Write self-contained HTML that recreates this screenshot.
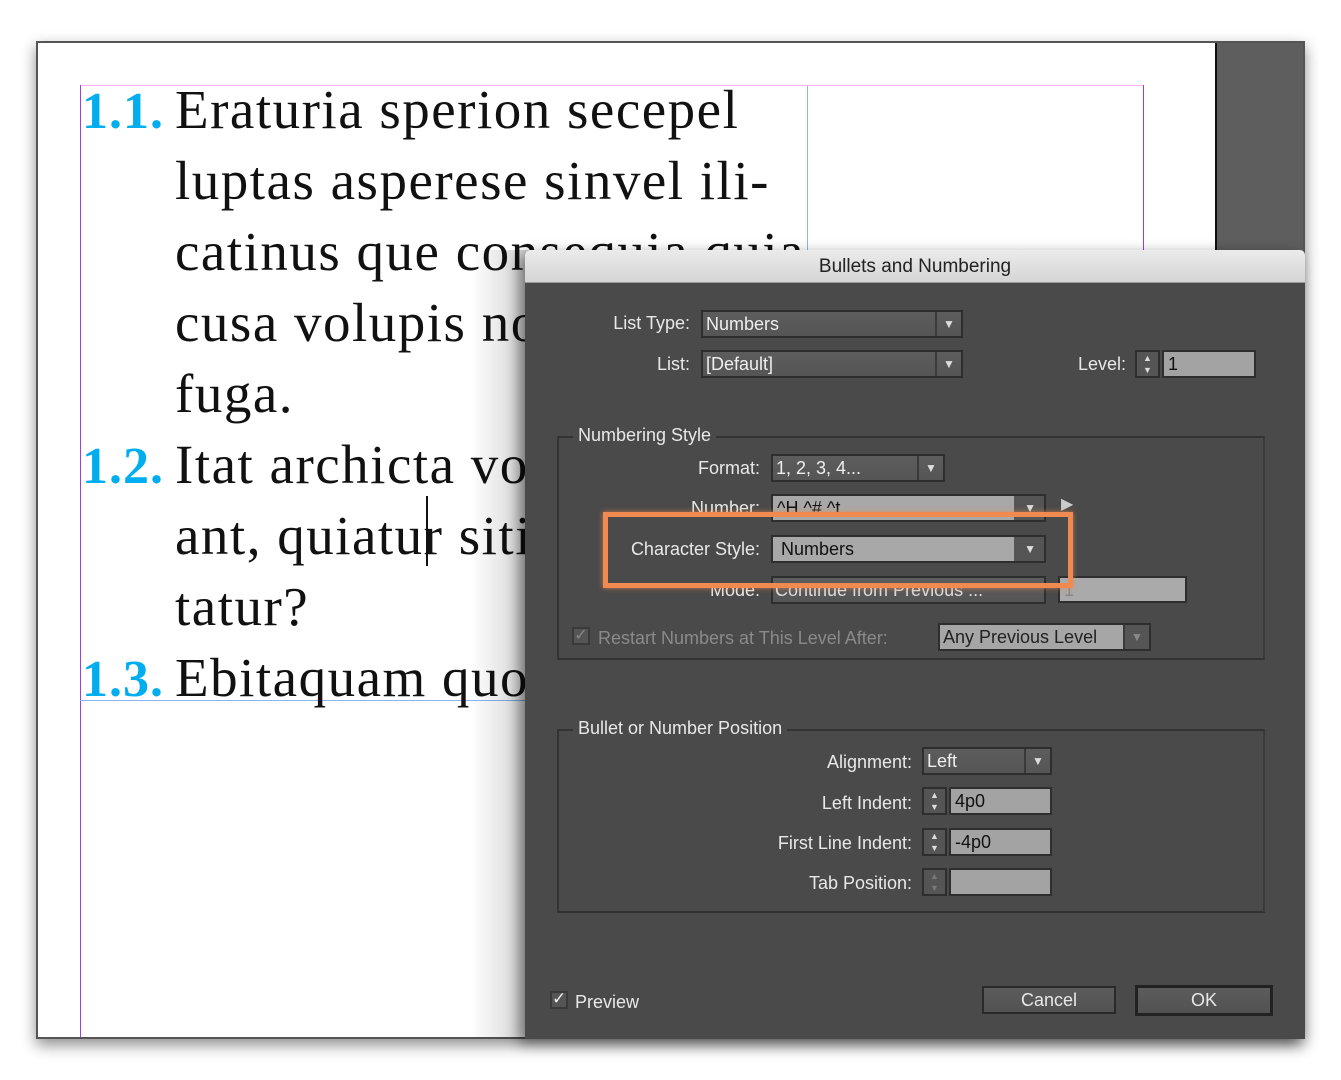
<!DOCTYPE html>
<html><head><meta charset="utf-8">
<style>
*{margin:0;padding:0;box-sizing:border-box}
body{width:1341px;height:1080px;background:#fff;position:relative;overflow:hidden;font-family:"Liberation Sans",sans-serif}
.abs{position:absolute}
#frame{left:36px;top:41px;width:1269px;height:998px;border:2px solid #555;background:#fff;box-shadow:0 6px 14px rgba(0,0,0,.45)}
.ser{font-family:"Liberation Serif",serif;font-size:55px;color:#111;white-space:nowrap;line-height:71px;letter-spacing:1.5px}
.num{color:#00aeef;font-weight:bold;font-family:"Liberation Serif",serif;font-size:52px;letter-spacing:1px}
#dlg{left:525px;top:250px;width:780px;height:789px;background:#4a4a4a;box-shadow:-6px 4px 14px rgba(0,0,0,.45);border-radius:5px 5px 0 0;overflow:hidden}
#title{left:0;top:0;width:780px;height:33px;background:linear-gradient(#ecebec,#d6d5d6);border-bottom:1px solid #9a9a9a;font-size:19px;color:#222;text-align:center;line-height:33px}
.lbl{font-size:18px;color:#e8e8e8;white-space:nowrap;text-align:right}
.dd{background:linear-gradient(#5d5d5d,#555);border:2px solid #2e2e2e;color:#eee;font-size:18px;line-height:24px;padding-left:3px;white-space:nowrap;overflow:hidden}
.dd .ar{position:absolute;right:0;top:0;width:26px;height:100%;border-left:2px solid #3a3a3a;text-align:center;font-size:12px;color:#ddd;line-height:24px}
.fld{background:#a3a3a3;border:2px solid #2e2e2e;color:#111;font-size:18px;line-height:24px;padding-left:4px;overflow:hidden;white-space:nowrap}
.spin{background:#555;border:2px solid #2e2e2e;font-size:9px;color:#ddd;text-align:center;line-height:12px}
.grp{border:2px solid #333;border-right-color:#3a3a3a}
.leg{background:#4a4a4a;padding:0 5px;font-size:18px;color:#e8e8e8}
.btn{background:linear-gradient(#5c5c5c,#525252);border:2px solid #2a2a2a;color:#e8e8e8;font-size:18px;text-align:center;line-height:24px}
</style></head><body>
<div id="frame" class="abs"></div>
<div class="abs" style="left:1215px;top:43px;width:2px;height:994px;background:#111"></div>
<div class="abs" style="left:1217px;top:43px;width:86px;height:994px;background:#5e5e5e"></div>
<div class="abs" style="left:80px;top:85px;width:1064px;height:1px;background:#f9b3f9"></div>
<div class="abs" style="left:80px;top:85px;width:1px;height:952px;background:#9b3fe0"></div>
<div class="abs" style="left:1143px;top:85px;width:1px;height:170px;background:#9b3fe0"></div>
<div class="abs" style="left:807px;top:86px;width:1px;height:170px;background:#8ab4f0"></div>
<div class="abs" style="left:80px;top:700px;width:450px;height:1px;background:#8ab4f0"></div>
<div class="abs ser" style="left:82px;top:74px"><span class="num">1.1.</span></div>
<div class="abs ser" style="left:175px;top:74px">Eraturia sperion secepel<br>luptas asperese sinvel ili-<br>catinus que consequia quia<br>cusa volupis nonsequ<br>fuga.</div>
<div class="abs ser" style="left:82px;top:429px"><span class="num">1.2.</span></div>
<div class="abs ser" style="left:175px;top:429px">Itat archicta volupta<br>ant, quiatur sitim<br>tatur?</div>
<div class="abs ser" style="left:82px;top:642px"><span class="num">1.3.</span></div>
<div class="abs ser" style="left:175px;top:642px">Ebitaquam quod</div>
<div class="abs" style="left:426px;top:496px;width:2px;height:70px;background:#111"></div>
<div class="abs" style="left:470px;top:250px;width:60px;height:789px;background:linear-gradient(90deg,rgba(0,0,0,0),rgba(0,0,0,.18))"></div>

<div id="dlg" class="abs">
<div id="title" class="abs">Bullets and Numbering</div>
<div class="abs lbl" style="left:0;width:165px;top:63px">List Type:</div>
<div class="abs dd" style="left:176px;top:60px;width:262px;height:28px">Numbers<span class="ar">▼</span></div>
<div class="abs lbl" style="left:0;width:165px;top:104px">List:</div>
<div class="abs dd" style="left:176px;top:100px;width:262px;height:28px">[Default]<span class="ar">▼</span></div>
<div class="abs lbl" style="left:500px;width:101px;top:104px">Level:</div>
<div class="abs spin" style="left:610px;top:100px;width:25px;height:28px">▲<br>▼</div>
<div class="abs fld" style="left:637px;top:100px;width:94px;height:28px">1</div>

<div class="abs grp" style="left:32px;top:186px;width:708px;height:224px"></div>
<div class="abs leg" style="left:48px;top:175px">Numbering Style</div>
<div class="abs lbl" style="left:0;width:235px;top:208px">Format:</div>
<div class="abs dd" style="left:246px;top:204px;width:174px;height:28px">1, 2, 3, 4...<span class="ar">▼</span></div>
<div class="abs" style="left:100px;top:244px;width:700px;height:20px;overflow:hidden">
 <div class="abs lbl" style="left:0;width:135px;top:4px">Number:</div>
 <div class="abs fld" style="left:146px;top:0;width:275px;height:28px;background:linear-gradient(90deg,#a8a8a8 89%,#555 89%)">^H.^#.^t<span style="position:absolute;right:8px;color:#ddd;font-size:12px">▼</span></div>
</div>
<div class="abs" style="left:246px;top:264px;width:275px;height:8px;background:linear-gradient(90deg,#a8a8a8 89%,#555 89%);border:2px solid #2e2e2e;border-top:0"></div>
<div class="abs" style="left:536px;top:244px;color:#ccc;font-size:16px">▶</div>
<div class="abs lbl" style="left:0;width:235px;top:289px">Character Style:</div>
<div class="abs fld" style="left:246px;top:285px;width:275px;height:28px;background:linear-gradient(90deg,#a8a8a8 89%,#555 89%);padding-left:8px">Numbers<span style="position:absolute;right:8px;color:#ddd;font-size:12px">▼</span></div>
<div class="abs dd" style="left:246px;top:326px;width:275px;height:28px"></div>
<div class="abs" style="left:100px;top:337px;width:700px;height:20px;overflow:hidden">
 <div class="abs lbl" style="left:0;width:135px;top:-7px">Mode:</div>
 <div class="abs" style="left:150px;top:-7px;font-size:18px;color:#ddd;white-space:nowrap">Continue from Previous ...</div>
</div>
<div class="abs fld" style="left:533px;top:326px;width:129px;height:27px;background:#aaa;color:#888">1</div>
<div class="abs" style="left:78px;top:262px;width:470px;height:76px;border:5px solid #f08a50;box-shadow:0 0 5px rgba(240,138,80,.7)"></div>

<div class="abs" style="left:47px;top:377px;width:18px;height:18px;border:2px solid #3a3a3a;background:#555;color:#888;font-size:16px;line-height:14px;text-align:center">✓</div>
<div class="abs lbl" style="left:73px;top:378px;color:#8a8a8a;text-align:left">Restart Numbers at This Level After:</div>
<div class="abs dd" style="left:413px;top:373px;width:213px;height:28px;background:#555"><span style="background:#a6a6a6;color:#222;display:block;position:absolute;left:0;top:0;width:183px;height:100%;padding-left:3px">Any Previous Level</span><span class="ar" style="color:#888">▼</span></div>

<div class="abs grp" style="left:32px;top:479px;width:708px;height:184px"></div>
<div class="abs leg" style="left:48px;top:468px">Bullet or Number Position</div>
<div class="abs lbl" style="left:0;width:387px;top:502px">Alignment:</div>
<div class="abs dd" style="left:397px;top:497px;width:130px;height:28px">Left<span class="ar">▼</span></div>
<div class="abs lbl" style="left:0;width:387px;top:543px">Left Indent:</div>
<div class="abs spin" style="left:397px;top:537px;width:25px;height:28px">▲<br>▼</div>
<div class="abs fld" style="left:424px;top:537px;width:103px;height:28px">4p0</div>
<div class="abs lbl" style="left:0;width:387px;top:583px">First Line Indent:</div>
<div class="abs spin" style="left:397px;top:578px;width:25px;height:28px">▲<br>▼</div>
<div class="abs fld" style="left:424px;top:578px;width:103px;height:28px">-4p0</div>
<div class="abs lbl" style="left:0;width:387px;top:623px">Tab Position:</div>
<div class="abs spin" style="left:397px;top:618px;width:25px;height:28px;color:#777">▲<br>▼</div>
<div class="abs fld" style="left:424px;top:618px;width:103px;height:28px"></div>

<div class="abs" style="left:25px;top:741px;width:18px;height:18px;border:2px solid #3a3a3a;background:#555;color:#eee;font-size:17px;line-height:12px;text-align:center">✓</div>
<div class="abs lbl" style="left:50px;top:742px;text-align:left">Preview</div>
<div class="abs btn" style="left:457px;top:736px;width:134px;height:28px">Cancel</div>
<div class="abs btn" style="left:610px;top:735px;width:138px;height:31px;border:3px solid #222;line-height:25px">OK</div>
</div>
</body></html>
